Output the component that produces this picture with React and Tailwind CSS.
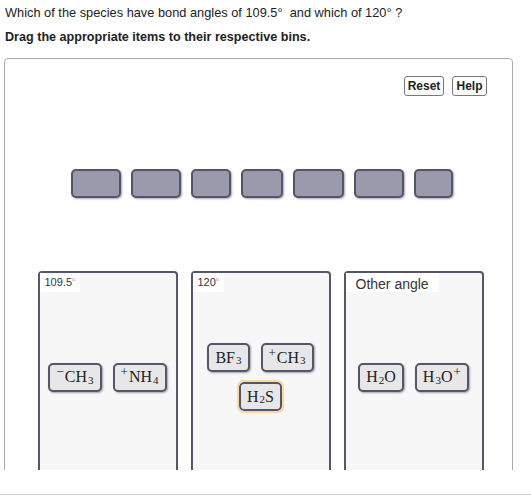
import React from 'react';

const tiles = [50, 50, 40, 42, 51, 50, 39];

const Chip = ({ children, glow }) => (
  <div
    className={`h-[29px] px-[6px] flex items-center rounded-[5px] border-2 border-[#56566a] bg-[#e7e7e7] text-[#222] text-[16px] leading-none font-['Liberation_Serif',serif] shadow-[1px_1px_2px_rgba(0,0,0,0.35)] ${
      glow ? 'outline outline-2 outline-[#fcd7a0]' : ''
    }`}
  >
    {children}
  </div>
);

const Sub = ({ children }) => <sub className="text-[11px] ml-[1px]">{children}</sub>;
const Sup = ({ children, after }) => (
  <sup className={`text-[13px] top-[-0.35em] ${after ? 'ml-[1px]' : 'mr-[1px]'}`}>{children}</sup>
);

const Bin = ({ label, big, children }) => (
  <div className="w-[140px] h-[230px] border-2 border-[#56566a] rounded-t-[4px] bg-[#f7f7f7] flex flex-col">
    <div className="self-start bg-white h-[19px] flex items-center">
      {big ? (
        <span className="px-[10px] text-[14px] text-[#333] pt-[4px]">{label}</span>
      ) : (
        <span className="px-[5px] text-[11px] text-[#333]">
          {label}
          <span className="text-[6px] align-super text-gray-400">o</span>
        </span>
      )}
    </div>
    <div className="h-[170px] flex flex-wrap items-center content-center justify-center gap-x-[11px] gap-y-[10px]">
      {children}
    </div>
  </div>
);

export default function App() {
  return (
    <div className="w-[531px] h-[502px] bg-white font-['Liberation_Sans',sans-serif] text-[#222] overflow-hidden">
      <p className="pl-[5px] pt-[5px] text-[12.8px] leading-[16px]">
        Which of the species have bond angles of 109.5° &nbsp;and which of 120° ?
      </p>
      <p className="pl-[5px] mt-[8px] text-[12.6px] leading-[16px] font-bold">
        Drag the appropriate items to their respective bins.
      </p>

      <div className="h-[412px] mt-[13px] overflow-hidden">
        <div className="ml-[4px] w-[509px] h-[480px] border border-[#aaa] rounded-[4px]">
          <div className="flex justify-end gap-[8px] pr-[25px] pt-[17px]">
            <button className="w-[40px] h-[20px] border border-[#777] rounded-[3px] text-[12px] font-bold bg-white">
              Reset
            </button>
            <button className="w-[35px] h-[20px] border border-[#777] rounded-[3px] text-[12px] font-bold bg-white">
              Help
            </button>
          </div>

          <div className="flex justify-center gap-[10px] mt-[73px] pl-[6px]">
            {tiles.map((w, i) => (
              <div
                key={i}
                style={{ width: w }}
                className="h-[29px] rounded-[5px] border-2 border-[#55556a] bg-[#9a9aac] shadow-[1px_1px_2px_rgba(0,0,0,0.35)]"
              />
            ))}
          </div>

          <div className="flex justify-center gap-[13px] mt-[73px] pl-[4px]">
            <Bin label="109.5">
              <Chip>
                <Sup>−</Sup>CH<Sub>3</Sub>
              </Chip>
              <Chip>
                <Sup>+</Sup>NH<Sub>4</Sub>
              </Chip>
            </Bin>
            <Bin label="120">
              <Chip>
                BF<Sub>3</Sub>
              </Chip>
              <Chip>
                <Sup>+</Sup>CH<Sub>3</Sub>
              </Chip>
              <Chip glow>
                H<Sub>2</Sub>S
              </Chip>
            </Bin>
            <Bin label="Other angle" big>
              <Chip>
                H<Sub>2</Sub>O
              </Chip>
              <Chip>
                H<Sub>3</Sub>O<Sup after>+</Sup>
              </Chip>
            </Bin>
          </div>
        </div>
      </div>

      <div className="mt-[24px] h-px bg-[#ccc]" />
    </div>
  );
}
